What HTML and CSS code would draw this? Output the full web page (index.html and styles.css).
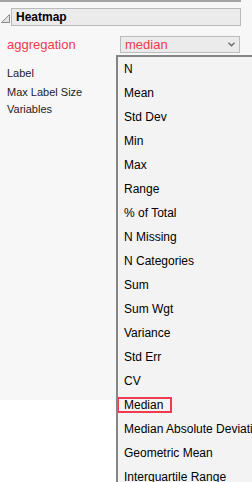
FILE: index.html
```html
<!DOCTYPE html>
<html lang="en">
<head>
  <meta charset="UTF-8" />
  <title>Heatmap</title>
  <link rel="stylesheet" href="styles.css">
</head>
<body>
  <div class="panel">
    <div class="topline"></div>

    <div class="header">
      <svg class="toggle" width="9" height="9" viewBox="0 0 9 9">
        <polygon points="8.5,0.5 8.5,8.5 0.5,8.5" fill="#e2e2e2" stroke="#8c8c8c" stroke-width="1"/>
      </svg>
      <div class="title">Heatmap</div>
    </div>

    <div class="row">
      <span class="field-name">aggregation</span>
      <div class="select">
        <span>median</span>
        <svg width="7" height="5" viewBox="0 0 7 5">
          <path d="M0.5 0.8 L3.5 3.8 L6.5 0.8" fill="none" stroke="#6a6a6a" stroke-width="1.4"/>
        </svg>
      </div>
    </div>

    <div class="labels">
      <div class="lbl first">Label</div>
      <div class="lbl">Max Label Size</div>
      <div class="lbl last">Variables</div>
    </div>
  </div>

  <!-- open dropdown list -->
  <ul class="menu">
    <li>N</li>
    <li>Mean</li>
    <li>Std Dev</li>
    <li>Min</li>
    <li>Max</li>
    <li>Range</li>
    <li>% of Total</li>
    <li>N Missing</li>
    <li>N Categories</li>
    <li>Sum</li>
    <li>Sum Wgt</li>
    <li>Variance</li>
    <li>Std Err</li>
    <li>CV</li>
    <li><span class="picked">Median</span></li>
    <li>Median Absolute Deviation</li>
    <li>Geometric Mean</li>
    <li>Interquartile Range</li>
  </ul>
</body>
</html>
```

FILE: styles.css
```css
body {
  margin: 0;
  background: #fff;
  font-family: "Liberation Sans", Arial, sans-serif;
  position: relative;
  height: 482px;
  overflow: hidden;
}

.panel {
  height: 400px;
  background: #f7f7f7;
}

.topline {
  width: 241px;
  height: 2px;
  background: #a3a3a3;
}

.header {
  display: flex;
  align-items: center;
  gap: 1px;
  margin: 6px 0 0 1px;
}

.toggle {
  display: block;
  margin-top: 2px;
}

.title {
  width: 224px;
  height: 16px;
  line-height: 16px;
  padding-left: 4px;
  background: #ebebeb;
  border: 1px solid #b9b9b9;
  font-weight: bold;
  font-size: 12px;
  color: #000;
}

.row {
  display: flex;
  align-items: center;
  justify-content: space-between;
  margin: 10px 12px 0 7px;
}

.field-name {
  color: #f0374f;
  font-size: 13px;
}

.select {
  width: 110px;
  height: 15px;
  padding: 0 4px;
  display: flex;
  align-items: center;
  justify-content: space-between;
  background: #ebebeb;
  border: 1px solid #bcbcbc;
  color: #f0374f;
  font-size: 13px;
}

.labels {
  margin: 11px 0 0 7px;
  font-size: 11px;
  color: #1c1c1c;
}

.lbl {
  height: 19px;
  line-height: 19px;
}

.lbl.last {
  margin-top: -2px;
}

.menu {
  position: absolute;
  left: 116px;
  top: 55px;
  right: 0;
  bottom: 0;
  margin: 0;
  padding: 0;
  list-style: none;
  background: #f3f3f3;
  border-left: 2px solid #858585;
  border-top: 2px solid #858585;
  overflow: hidden;
  white-space: nowrap;
}

.menu li {
  height: 24px;
  line-height: 24px;
  padding-left: 6px;
  font-size: 12px;
  color: #000;
}

.picked {
  display: inline-block;
  margin-left: -7px;
  padding: 0 7px 0 5px;
  line-height: 12px;
  border: 2px solid #ef3a50;
}
```
